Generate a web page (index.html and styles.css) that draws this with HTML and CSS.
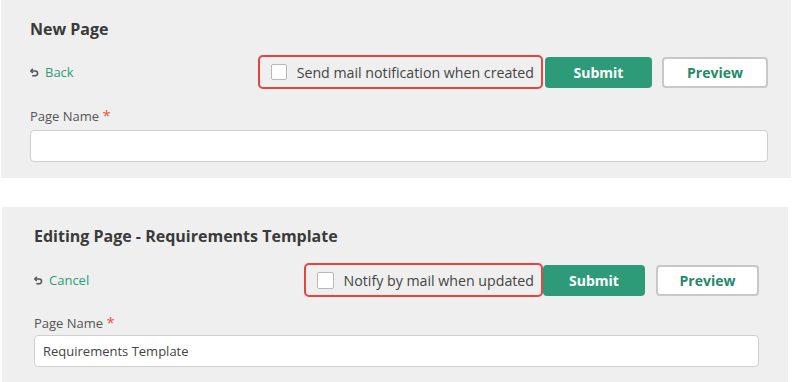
FILE: index.html
```html
<!DOCTYPE html>
<html lang="en">
<head>
<meta charset="utf-8">
<link rel="stylesheet" href="styles.css">
</head>
<body>
<section class="panel panel-new">
  <h2 class="title">New Page</h2>
  <div class="toolbar">
    <a class="back" href="#"><svg class="undo" viewBox="0 0 10 10" width="9" height="9"><path d="M3.2 1 L1 3.3 L3.2 5.6" fill="none" stroke="#555" stroke-width="1.7"/><path d="M1.3 3.3 H5.8 A2.6 2.6 0 0 1 5.8 8.5 H2.5" fill="none" stroke="#555" stroke-width="1.7"/></svg>Back</a>
    <div class="actions">
      <label class="notify"><span class="box"></span>Send mail notification when created</label>
      <button class="btn submit">Submit</button>
      <button class="btn preview">Preview</button>
    </div>
  </div>
  <div class="field">
    <label class="label">Page Name <span class="req">*</span></label>
    <input class="input" type="text" value="">
  </div>
</section>
<section class="panel panel-edit">
  <h2 class="title">Editing Page - Requirements Template</h2>
  <div class="toolbar">
    <a class="back" href="#"><svg class="undo" viewBox="0 0 10 10" width="9" height="9"><path d="M3.2 1 L1 3.3 L3.2 5.6" fill="none" stroke="#555" stroke-width="1.7"/><path d="M1.3 3.3 H5.8 A2.6 2.6 0 0 1 5.8 8.5 H2.5" fill="none" stroke="#555" stroke-width="1.7"/></svg>Cancel</a>
    <div class="actions">
      <label class="notify"><span class="box"></span>Notify by mail when updated</label>
      <button class="btn submit">Submit</button>
      <button class="btn preview">Preview</button>
    </div>
  </div>
  <div class="field">
    <label class="label">Page Name <span class="req">*</span></label>
    <input class="input" type="text" value="Requirements Template">
  </div>
</section>
</body>
</html>
```
FILE: styles.css
```css
html, body {
  margin: 0;
  padding: 0;
  background: #ffffff;
  font-family: "Open Sans", "Noto Sans", sans-serif;
  color: #444;
}
.panel {
  background: #efefef;
  box-sizing: border-box;
}
.panel-new {
  margin-left: 1px;
  width: 790px;
  height: 178px;
  padding: 18px 23px 0 29px;
}
.panel-edit {
  margin-left: 2px;
  margin-top: 29px;
  width: 786px;
  height: 175px;
  padding: 18px 29px 0 32px;
}
.title {
  margin: 0;
  font-size: 16px;
  font-weight: 700;
  line-height: 22px;
  color: #3a3a3a;
}
.toolbar {
  display: flex;
  justify-content: space-between;
  align-items: center;
  margin-top: 15px;
}
.panel-edit .toolbar { margin-top: 16px; }
.back {
  display: flex;
  align-items: center;
  gap: 6px;
  color: #2a9d7a;
  text-decoration: none;
  font-size: 13px;
}
.undo { display: block; }
.actions {
  display: flex;
  align-items: center;
}
.notify {
  display: flex;
  align-items: center;
  height: 30px;
  padding: 0 7px 0 11px;
  border: 2px solid #e8433d;
  border-radius: 5px;
  font-size: 14.2px;
  color: #444;
}
.box {
  width: 14px;
  height: 14px;
  border: 1px solid #b8b8b8;
  border-radius: 2px;
  background: #fff;
  margin-right: 10px;
}
.btn {
  font-family: "Open Sans", "Noto Sans", sans-serif;
  font-size: 14px;
  font-weight: 700;
  height: 31px;
  border-radius: 4px;
  cursor: pointer;
  box-sizing: border-box;
}
.submit {
  width: 107px;
  margin-left: 2px;
  background: #2e9b78;
  color: #fff;
  border: none;
}
.preview {
  width: 106px;
  margin-left: 10px;
  background: #fff;
  color: #23896a;
  border: 2px solid #c8c8c8;
}
.panel-edit .submit { width: 102px; margin-left: 0; }
.panel-edit .preview { width: 103px; margin-left: 11px; }
.panel-edit .box { width: 15px; height: 15px; }
.field {
  margin-top: 17px;
}
.panel-edit .field { margin-top: 16px; }
.label {
  display: block;
  font-size: 13px;
  line-height: 18px;
  color: #555;
}
.req {
  color: #e9553a;
  font-size: 15px;
}
.input {
  display: block;
  box-sizing: border-box;
  width: 100%;
  height: 32px;
  margin-top: 5px;
  border: 1px solid #cfcfcf;
  border-radius: 4px;
  background: #fff;
  font-family: "Open Sans", "Noto Sans", sans-serif;
  font-size: 13px;
  color: #444;
  padding: 0 8px;
}
.panel-edit .input { margin-top: 3px; }
```
